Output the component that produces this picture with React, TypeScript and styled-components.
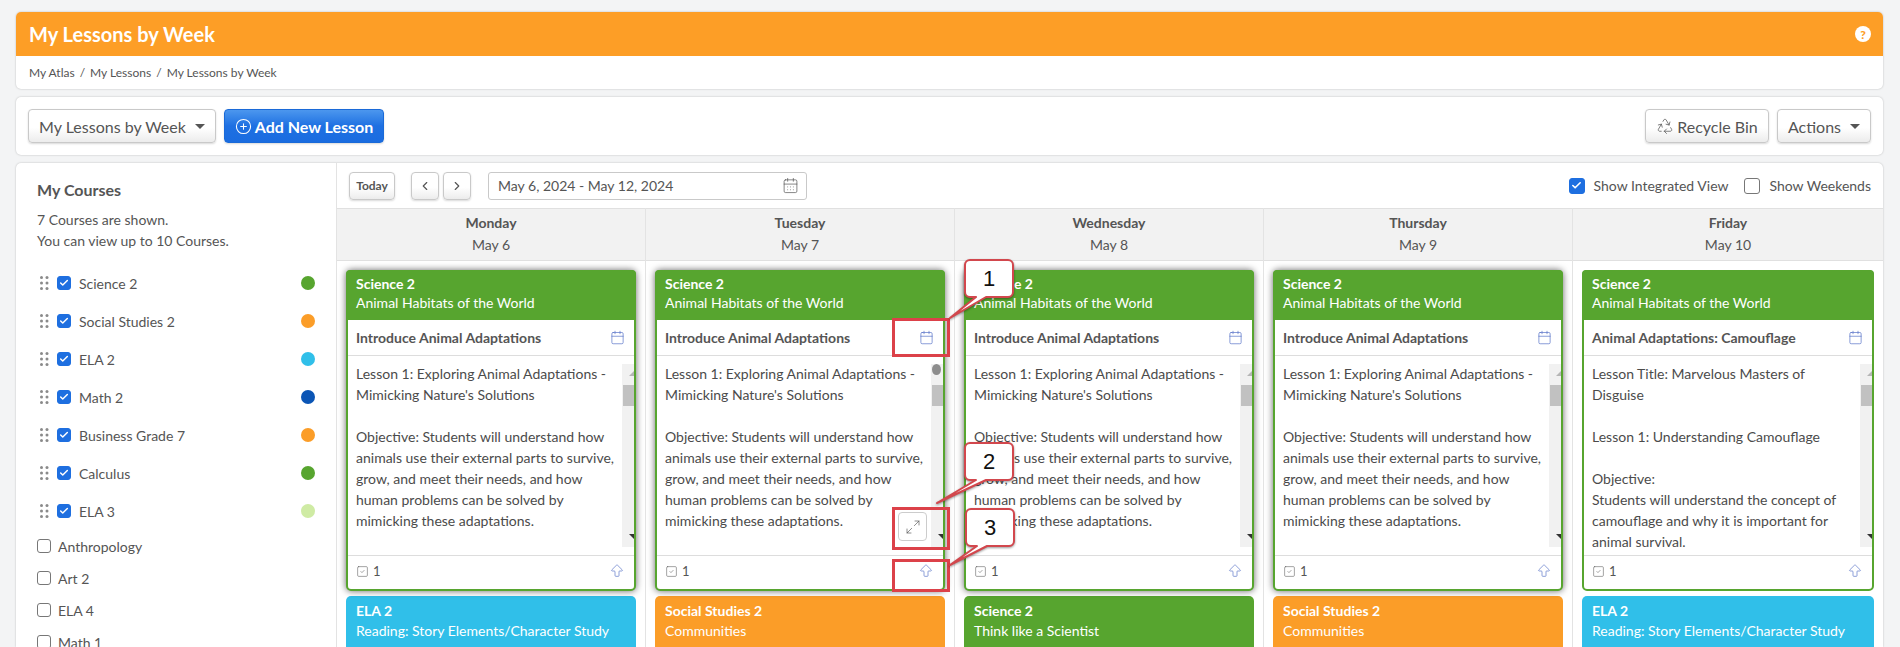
import React from "react";
import styled, { createGlobalStyle } from "styled-components";
import { ArrowBigUp, Calendar, CalendarDays, Check, ChevronLeft, ChevronRight, CirclePlus, Maximize2, Recycle, SquareCheck } from "lucide-react";

const Global = createGlobalStyle`
  html, body { margin: 0; padding: 0; height: 647px; overflow: hidden; background: #f3f4f5; }
  body { font-family: Lato, "Liberation Sans", sans-serif; color: #555; font-size: 14px; }
`;

const Page = styled.div`
  position: relative;
  width: 1900px;
  height: 647px;
  overflow: hidden;
  box-sizing: border-box;
  padding: 12px 17px 0 16px;
  display: flex;
  flex-direction: column;
  gap: 8px;
`;
const Panel = styled.section`
  background: #fff;
  border-radius: 5px;
  box-shadow: 0 0 2px rgba(0, 0, 0, 0.25);
`;
const TitlePanel = styled(Panel)`
  height: 77px;
  overflow: hidden;
`;
const TitleBar = styled.header`
  height: 44px;
  background: #fd9e26;
  display: flex;
  align-items: center;
  justify-content: space-between;
  padding: 0 12px 0 13px;
`;
const Title = styled.h1`
  margin: 0;
  color: #fff;
  font-size: 20px;
  font-weight: 700;
`;
const Help = styled.span`
  width: 16px;
  height: 16px;
  border-radius: 50%;
  background: #fff;
  color: #fd9e26;
  font-size: 12px;
  font-weight: 900;
  display: flex;
  align-items: center;
  justify-content: center;
`;
const Crumbs = styled.nav`
  height: 33px;
  display: flex;
  align-items: center;
  padding-left: 13px;
  font-size: 12px;
  color: #555;
  gap: 5px;
`;
const Toolbar = styled(Panel)`
  height: 58px;
  display: flex;
  align-items: center;
  padding: 0 12px 0 12px;
  gap: 8px;
`;
const Spacer = styled.div`
  flex: 1;
`;
const Button = styled.button<{ $w: number; $h?: number; $size?: number }>`
  width: ${(p) => p.$w}px;
  height: ${(p) => p.$h ?? 34}px;
  box-sizing: border-box;
  border: 1px solid #c9c9c9;
  border-radius: 4px;
  background: linear-gradient(#ffffff 55%, #ececec);
  box-shadow: 0 1px 2px rgba(0, 0, 0, 0.15);
  color: #555;
  font-family: inherit;
  font-size: ${(p) => p.$size ?? 16}px;
  display: inline-flex;
  align-items: center;
  justify-content: center;
  gap: 3px;
  padding: 0;
`;
const PrimaryButton = styled(Button)`
  border-color: #1a6ad8;
  background: linear-gradient(#4c97ee, #1e70e2 50%, #1a6ce0);
  color: #fff;
  font-weight: 700;
`;
const Caret = styled.i`
  width: 0;
  height: 0;
  margin-left: 6px;
  border-left: 5px solid transparent;
  border-right: 5px solid transparent;
  border-top: 5px solid #555;
`;
const Main = styled(Panel)`
  flex: 1;
  display: grid;
  grid-template-columns: 321px 1fr;
  border-radius: 5px 5px 0 0;
  overflow: hidden;
`;
const Sidebar = styled.aside`
  box-sizing: border-box;
  padding: 17px 0 0 21px;
  border-right: 1px solid #e3e3e3;
`;
const SideTitle = styled.h2`
  margin: 0 0 9px;
  font-size: 16px;
  line-height: 20px;
  font-weight: 700;
  color: #555;
`;
const SideNote = styled.p`
  margin: 0 0 13px;
  font-size: 14px;
  line-height: 21px;
  color: #555;
`;
const ActiveRow = styled.div`
  height: 38px;
  display: flex;
  align-items: center;
  padding-left: 3px;
  padding-right: 21px;
  gap: 8px;
  font-size: 14px;
`;
const InactiveRow = styled.div`
  height: 32px;
  display: flex;
  align-items: center;
  gap: 7px;
  font-size: 14px;
`;
const Dot = styled.span<{ $c: string }>`
  margin-left: auto;
  width: 14px;
  height: 14px;
  border-radius: 50%;
  background: ${(p) => p.$c};
`;
const Box = styled.span<{ $on?: boolean; $s?: number }>`
  width: ${(p) => p.$s ?? 14}px;
  height: ${(p) => p.$s ?? 14}px;
  box-sizing: border-box;
  flex: none;
  border-radius: 3px;
  border: 1px solid ${(p) => (p.$on ? "#1e6fe0" : "#777")};
  background: ${(p) => (p.$on ? "#1e6fe0" : "#fff")};
  display: inline-flex;
  align-items: center;
  justify-content: center;
  color: #fff;
`;
const Calendarea = styled.div`
  min-width: 0;
  display: flex;
  flex-direction: column;
`;
const CalTools = styled.div`
  height: 45px;
  flex: none;
  display: flex;
  align-items: center;
  box-sizing: border-box;
  padding: 0 12px;
`;
const Today = styled(Button)`
  margin-right: 16px;
  font-weight: 700;
`;
const Next = styled(Button)`
  margin-left: 4px;
`;
const DateField = styled.div`
  margin-left: 17px;
  width: 319px;
  height: 28px;
  box-sizing: border-box;
  border: 1px solid #c9c9c9;
  border-radius: 3px;
  display: flex;
  align-items: center;
  justify-content: space-between;
  padding: 0 7px 0 9px;
  font-size: 14px;
  color: #555;
`;
const Toggle = styled.label`
  display: inline-flex;
  align-items: center;
  gap: 9px;
  font-size: 14px;
  color: #555;
  margin-left: 16px;
`;
const Week = styled.div`
  display: grid;
  grid-template-columns: repeat(4, 309px) 310px;
  flex: 1;
`;
const Day = styled.div<{ $last?: boolean }>`
  display: flex;
  flex-direction: column;
  box-sizing: border-box;
  border-right: ${(p) => (p.$last ? "none" : "1px solid #e3e3e3")};
  min-width: 0;
`;
const DayHead = styled.div`
  height: 53px;
  flex: none;
  box-sizing: border-box;
  background: #f2f2f2;
  border-top: 1px solid #e0e0e0;
  border-bottom: 1px solid #e0e0e0;
  text-align: center;
  font-size: 14px;
  line-height: 22px;
  padding-top: 3px;
`;
const DayName = styled.div`
  font-weight: 700;
`;
const DayBody = styled.div`
  padding: 9px 9px 0 9px;
  display: flex;
  flex-direction: column;
  gap: 5px;
`;
const Card = styled.article<{ $flat?: boolean }>`
  position: relative;
  height: 321px;
  box-sizing: border-box;
  border-radius: 5px;
  border: 2px solid #57a52f;
  background: #fff;
  display: flex;
  flex-direction: column;
  box-shadow: ${(p) => (p.$flat ? "none" : "0 0 7px rgba(0,0,0,0.6)")};
`;
const CardHead = styled.div<{ $c: string }>`
  background: ${(p) => p.$c};
  color: #fff;
  border-radius: 4px 4px 0 0;
  padding: 4px 8px 0 10px;
  font-size: 14px;
  line-height: 19px;
`;
const GreenHead = styled(CardHead)`
  height: 48px;
  margin: -2px -2px 0;
  padding-left: 10px;
  box-sizing: content-box;
  height: 46px;
`;
const CardName = styled.div`
  font-weight: 700;
`;
const CollapsedCard = styled(CardHead)`
  height: 60px;
  border-radius: 5px 5px 0 0;
  line-height: 20px;
  padding-top: 5px;
`;
const Sub = styled.div`
  height: 36px;
  flex: none;
  box-sizing: border-box;
  border-bottom: 1px solid #ddd;
  display: flex;
  align-items: center;
  justify-content: space-between;
  padding: 0 9px 0 8px;
  font-weight: 700;
  font-size: 14px;
  color: #555;
`;
const CardBody = styled.div`
  height: 200px;
  flex: none;
  display: flex;
  box-sizing: border-box;
  border-bottom: 1px solid #ddd;
  padding: 7px 0 8px 8px;
`;
const BodyText = styled.div`
  flex: 1;
  min-width: 0;
  height: 193px;
  overflow: hidden;
  white-space: pre-line;
  font-size: 14px;
  line-height: 21px;
  color: #4b4b4b;
  padding-right: 7px;
`;
const Track = styled.div`
  position: relative;
  width: 12px;
  flex: none;
  background: #f1f1f1;
  margin-top: 1px;
`;
const Thumb = styled.div`
  position: absolute;
  top: 21px;
  left: 1px;
  right: 0;
  height: 21px;
  background: #c1c1c1;
`;
const TrackArrow = styled.i<{ $down?: boolean }>`
  position: absolute;
  right: 0;
  width: 0;
  height: 0;
  border-left: 5px solid transparent;
  border-right: 0 solid transparent;
  ${(p) =>
    p.$down
      ? "bottom: 8px; border-top: 5px solid #333;"
      : "top: 7px; border-bottom: 5px solid #b5b5b5;"}
`;
const Grabber = styled.i`
  position: absolute;
  left: 1px;
  top: 0;
  width: 9px;
  height: 11px;
  border-radius: 50%;
  background: #8d8d8d;
`;
const Foot = styled.div`
  flex: 1;
  display: flex;
  align-items: center;
  padding: 0 9px 3px 8px;
  gap: 4px;
  font-size: 13px;
  color: #555;
`;
const UpIcon = styled(ArrowBigUp)`
  margin-left: auto;
  color: #5470c6;
`;
const Expand = styled.div`
  position: absolute;
  left: 241px;
  top: 240px;
  width: 29px;
  height: 29px;
  box-sizing: border-box;
  border: 1px solid #ccc;
  border-radius: 4px;
  background: #fff;
  color: #555;
  display: flex;
  align-items: center;
  justify-content: center;
`;
const Highlight = styled.div<{ $x: number; $y: number; $w: number; $h: number }>`
  position: absolute;
  left: ${(p) => p.$x}px;
  top: ${(p) => p.$y}px;
  width: ${(p) => p.$w}px;
  height: ${(p) => p.$h}px;
  box-sizing: border-box;
  border: 3px solid #dc4149;
`;
const Callout = styled.svg<{ $x: number; $y: number }>`
  position: absolute;
  left: ${(p) => p.$x}px;
  top: ${(p) => p.$y}px;
  overflow: visible;
`;

const COLORS = { green: "#57a52f", orange: "#fb9d28", blue: "#30bfe9", navy: "#0b55b5", lime: "#cfeba4" };

const courses: [string, string][] = [
  ["Science 2", COLORS.green],
  ["Social Studies 2", COLORS.orange],
  ["ELA 2", COLORS.blue],
  ["Math 2", COLORS.navy],
  ["Business Grade 7", COLORS.orange],
  ["Calculus", COLORS.green],
  ["ELA 3", COLORS.lime],
];
const others = ["Anthropology", "Art 2", "ELA 4", "Math 1"];

const TEXT_A =
  "Lesson 1: Exploring Animal Adaptations - Mimicking Nature's Solutions\n\nObjective: Students will understand how animals use their external parts to survive, grow, and meet their needs, and how human problems can be solved by mimicking these adaptations.";
const TEXT_B =
  "Lesson Title: Marvelous Masters of Disguise\n\nLesson 1: Understanding Camouflage\n\nObjective:\nStudents will understand the concept of camouflage and why it is important for animal survival.";

const days = [
  { name: "Monday", date: "May 6", sub: "Introduce Animal Adaptations", text: TEXT_A, next: ["ELA 2", "Reading: Story Elements/Character Study", COLORS.blue] },
  { name: "Tuesday", date: "May 7", sub: "Introduce Animal Adaptations", text: TEXT_A, next: ["Social Studies 2", "Communities", COLORS.orange], active: true },
  { name: "Wednesday", date: "May 8", sub: "Introduce Animal Adaptations", text: TEXT_A, next: ["Science 2", "Think like a Scientist", COLORS.green] },
  { name: "Thursday", date: "May 9", sub: "Introduce Animal Adaptations", text: TEXT_A, next: ["Social Studies 2", "Communities", COLORS.orange] },
  { name: "Friday", date: "May 10", sub: "Animal Adaptations: Camouflage", text: TEXT_B, next: ["ELA 2", "Reading: Story Elements/Character Study", COLORS.blue], flat: true },
];

const Grip = () => (
  <svg width="9" height="14" viewBox="0 0 9 14" fill="#8a8a8a">
    {[1.5, 7].map((x) => [1.5, 7, 12.5].map((y) => <circle key={`${x}${y}`} cx={x} cy={y} r="1.5" />))}
  </svg>
);

const Bubble = ({ x, y, n, tx, ty }: { x: number; y: number; n: number; tx: number; ty: number }) => (
  <Callout $x={x} $y={y} width="51" height="40">
    <path
      d={`M6 1H44a5 5 0 0 1 5 5V33a5 5 0 0 1-5 5H22L${tx} ${ty}L12 38H6a5 5 0 0 1-5-5V6a5 5 0 0 1 5-5Z`}
      fill="#fff"
      stroke="#d2474d"
      strokeWidth="2"
      strokeLinejoin="round"
      style={{ filter: "drop-shadow(0 1px 1px rgba(0,0,0,.4))" }}
    />
    <text x="25" y="27" textAnchor="middle" fontFamily="Liberation Sans, sans-serif" fontSize="22" fill="#111">
      {n}
    </text>
  </Callout>
);

export default function App() {
  return (
    <Page>
      <Global />
      <TitlePanel>
        <TitleBar>
          <Title>My Lessons by Week</Title>
          <Help>?</Help>
        </TitleBar>
        <Crumbs>
          <span>My Atlas</span>
          <span>/</span>
          <span>My Lessons</span>
          <span>/</span>
          <span>My Lessons by Week</span>
        </Crumbs>
      </TitlePanel>
      <Toolbar>
        <Button $w={188}>
          My Lessons by Week
          <Caret />
        </Button>
        <PrimaryButton $w={160}>
          <CirclePlus size={17} strokeWidth={1.5} />
          Add New Lesson
        </PrimaryButton>
        <Spacer />
        <Button $w={124}>
          <Recycle size={18} strokeWidth={1} />
          Recycle Bin
        </Button>
        <Button $w={94}>
          Actions
          <Caret />
        </Button>
      </Toolbar>
      <Main>
        <Sidebar>
          <SideTitle>My Courses</SideTitle>
          <SideNote>
            7 Courses are shown.
            <br />
            You can view up to 10 Courses.
          </SideNote>
          {courses.map(([name, c]) => (
            <ActiveRow key={name}>
              <Grip />
              <Box $on>
                <Check size={10} strokeWidth={3.5} />
              </Box>
              {name}
              <Dot $c={c} />
            </ActiveRow>
          ))}
          {others.map((name) => (
            <InactiveRow key={name}>
              <Box />
              {name}
            </InactiveRow>
          ))}
        </Sidebar>
        <Calendarea>
          <CalTools>
            <Today $w={46} $h={28} $size={12}>
              Today
            </Today>
            <Button $w={28} $h={28}>
              <ChevronLeft size={14} />
            </Button>
            <Next $w={28} $h={28}>
              <ChevronRight size={14} />
            </Next>
            <DateField>
              May 6, 2024 - May 12, 2024
              <CalendarDays size={17} strokeWidth={1} />
            </DateField>
            <Spacer />
            <Toggle>
              <Box $on $s={16}>
                <Check size={11} strokeWidth={3.5} />
              </Box>
              Show Integrated View
            </Toggle>
            <Toggle>
              <Box $s={16} />
              Show Weekends
            </Toggle>
          </CalTools>
          <Week>
            {days.map((d, i) => (
              <Day key={d.name} $last={i === 4}>
                <DayHead>
                  <DayName>{d.name}</DayName>
                  <div>{d.date}</div>
                </DayHead>
                <DayBody>
                  <Card $flat={d.flat}>
                    <GreenHead $c={COLORS.green}>
                      <CardName>Science 2</CardName>
                      Animal Habitats of the World
                    </GreenHead>
                    <Sub>
                      {d.sub}
                      <Calendar size={15} strokeWidth={1.1} color="#5470c6" />
                    </Sub>
                    <CardBody>
                      <BodyText>{d.text}</BodyText>
                      <Track>
                        {d.active ? <Grabber /> : <TrackArrow />}
                        <Thumb />
                        <TrackArrow $down />
                      </Track>
                    </CardBody>
                    <Foot>
                      <SquareCheck size={13} strokeWidth={1} />1
                      <UpIcon size={16} strokeWidth={1} />
                    </Foot>
                    {d.active && (
                      <Expand>
                        <Maximize2 size={16} strokeWidth={1} />
                      </Expand>
                    )}
                  </Card>
                  <CollapsedCard $c={d.next[2]}>
                    <CardName>{d.next[0]}</CardName>
                    {d.next[1]}
                  </CollapsedCard>
                </DayBody>
              </Day>
            ))}
          </Week>
        </Calendarea>
      </Main>
      <Highlight $x={892} $y={318} $w={58} $h={39} />
      <Highlight $x={892} $y={507} $w={58} $h={43} />
      <Highlight $x={892} $y={559} $w={58} $h={33} />
      <Bubble x={964} y={259} n={1} tx={-14} ty={59} />
      <Bubble x={964} y={442} n={2} tx={-27} ty={61} />
      <Bubble x={965} y={508} n={3} tx={-15} ty={57} />
    </Page>
  );
}
